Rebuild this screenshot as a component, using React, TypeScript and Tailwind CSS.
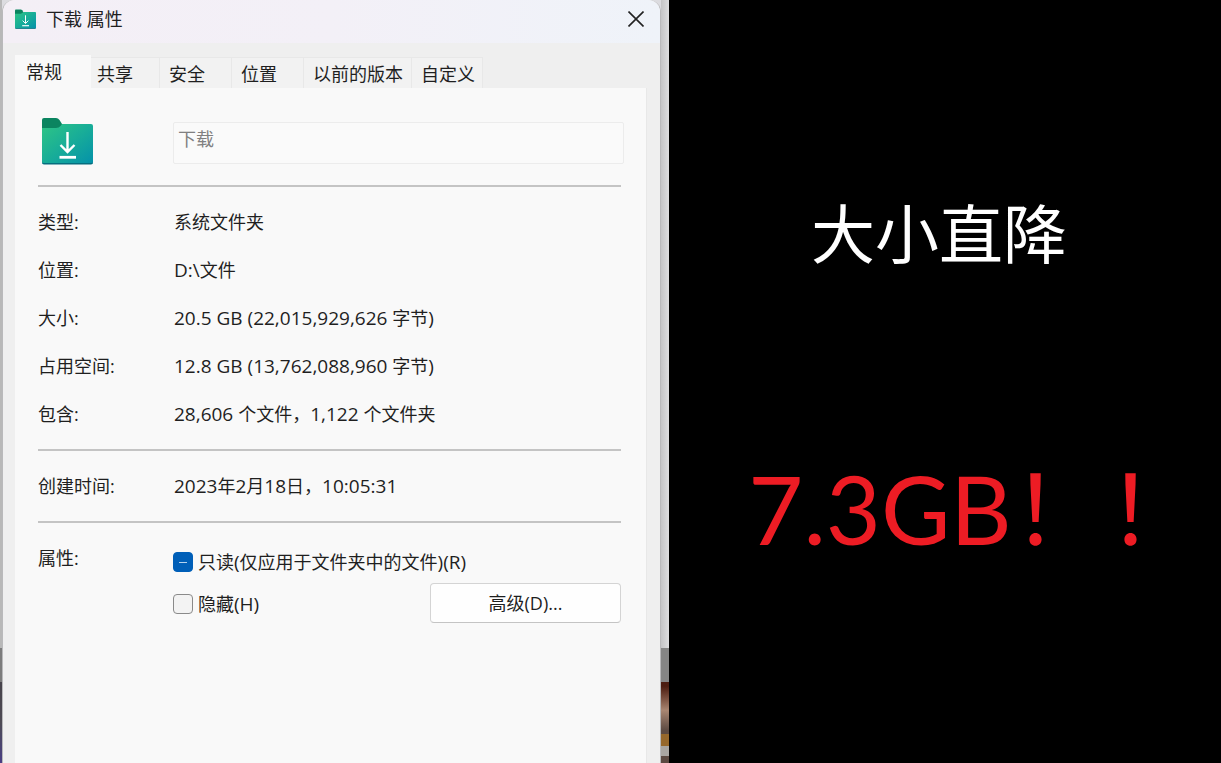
import React, { FunctionComponent, useEffect, useRef, useState } from 'react'

const tabs = [
  { name: '常规', width: 'w-[76px] pl-[11px]' },
  { name: '共享', width: 'w-[69px] pl-[6px]' },
  { name: '安全', width: 'w-[72px] pl-[9px]' },
  { name: '位置', width: 'w-[72px] pl-[9px]' },
  { name: '以前的版本', width: 'w-[108px] pl-[9px]' },
  { name: '自定义', width: 'w-[71px] pl-[9px]' },
]

const details = [
  { label: '类型:', value: '系统文件夹' },
  { label: '位置:', value: 'D:\\文件' },
  { label: '大小:', value: '20.5 GB (22,015,929,626 字节)' },
  { label: '占用空间:', value: '12.8 GB (13,762,088,960 字节)' },
  { label: '包含:', value: '28,606 个文件，1,122 个文件夹' },
]

const checkboxStyle =
  'grid h-5 w-5 shrink-0 appearance-none place-content-center rounded-[4px] border border-[#8a8a8a] bg-[#f3f3f3] checked:border-[#005fb8] checked:bg-[#005fb8] indeterminate:border-[#005fb8] indeterminate:bg-[#005fb8] indeterminate:before:h-px indeterminate:before:w-2 indeterminate:before:bg-[#b5d3ee]'

const FolderIcon: FunctionComponent<{ className: string; id: string }> = ({ className, id }) => (
  <svg viewBox="0 0 51 48" className={className} aria-hidden="true">
    <defs>
      <linearGradient id={id} x1="0" y1="0" x2="1" y2="1">
        <stop offset="0" stopColor="#2fc585" />
        <stop offset="0.5" stopColor="#18ad98" />
        <stop offset="1" stopColor="#0491aa" />
      </linearGradient>
    </defs>
    <path d="M0 3Q0 1 2 1H14Q16 1 17.500 3L20 7V12H0Z" fill="#0b8560" />
    <path d="M0 11H14Q17 11 18.500 9L20 7H49Q51 7 51 9V45Q51 47 49 47H2Q0 47 0 45Z" fill={`url(#${id})`} />
    <path d="M0 44.500Q0 46 2 46H49Q51 46 51 44.500V45.500Q51 47.500 49 47.500H2Q0 47.500 0 45.500Z" fill="#066e7e" />
    <path d="M25.500 15V34M18.500 28L25.500 35L32.500 28" fill="none" stroke="#fff" strokeWidth="2.400" />
    <path d="M17.500 40.300H34" stroke="#fff" strokeWidth="2.800" />
  </svg>
)

// Latin runs are set one step larger than the Chinese around them
const MixedText: FunctionComponent<{ text: string }> = ({ text }) => (
  <span>
    {text.split(/([\x20-\x7e]+)/).map((part, index) =>
      index % 2 === 1 ? (
        <span key={index} className="text-[19px]">{part}</span>
      ) : (
        part
      )
    )}
  </span>
)

const DetailRow: FunctionComponent<{ label: string; value: string }> = ({ label, value }) => (
  <div className="flex h-12 items-center">
    <dt className="w-[136px] shrink-0">{label}</dt>
    <dd className="whitespace-nowrap">
      <MixedText text={value} />
    </dd>
  </div>
)

const PropertiesDialog: FunctionComponent = () => {
  const [activeTab, setActiveTab] = useState<string>('常规')
  const readOnlyRef = useRef<HTMLInputElement>(null)

  // the folder holds both read-only and writable files
  useEffect(() => {
    if (readOnlyRef.current) readOnlyRef.current.indeterminate = true
  }, [])

  return (
    <section className="flex min-w-0 flex-1 flex-col rounded-t-xl border-x border-[#b9b9bb] bg-[#efefef]">
      <header className="flex h-[43px] shrink-0 items-center justify-between rounded-t-xl bg-linear-to-r from-[#f4eff6] via-[#f3f0f7] to-[#eff3f9] pr-4 pl-3">
        <h1 className="flex items-center gap-[10px] pb-[6px]">
          <FolderIcon className="h-5 w-[21px]" id="title-folder" />
          下载 属性
        </h1>
        <button aria-label="关闭" className="pb-[6px]">
          <svg viewBox="0 0 16 16" className="h-4 w-4" fill="none" stroke="#222" strokeWidth="1.600">
            <path d="M0.500 0.500L15.500 15.500M15.500 0.500L0.500 15.500" />
          </svg>
        </button>
      </header>

      <div className="flex flex-1 flex-col pt-3 pr-[13px] pl-3">
        <nav className="flex h-[33px] items-end">
          {tabs.map((tab) => (
            <button
              key={tab.name}
              onClick={() => setActiveTab(tab.name)}
              className={`${tab.width} shrink-0 text-left whitespace-nowrap ${
                tab.name === activeTab
                  ? 'h-[33px] bg-[#f9f9f9]'
                  : 'h-[31px] border-t border-r border-[#e8e8e8] bg-[#f2f2f2] pt-[2px]'
              }`}>
              {tab.name}
            </button>
          ))}
        </nav>

        <div className="flex-1 border-r border-[#e8e8e8] bg-[#f9f9f9] pr-[25px] pl-[23px]">
          <div className="flex h-[97px] items-center pt-[13px]">
            <FolderIcon className="mr-[80px] mb-1 ml-1 h-12 w-[51px] shrink-0" id="large-folder" />
            <input
              aria-label="名称"
              disabled
              defaultValue="下载"
              className="-mr-[3px] h-[42px] min-w-0 flex-1 rounded-[2px] border border-[#ececec] bg-[#fafafa] pb-[10px] pl-1 text-[#808080]"
            />
          </div>

          <dl className="border-y-2 border-[#c4c4c4] py-[11px]">
            {details.map((item) => (
              <DetailRow key={item.label} label={item.label} value={item.value} />
            ))}
          </dl>
          <dl className="border-b-2 border-[#c4c4c4] py-[11px]">
            <DetailRow label="创建时间:" value="2023年2月18日，10:05:31" />
          </dl>

          <fieldset className="flex pt-[23px]">
            <span className="w-[135px] shrink-0">属性:</span>
            <div className="flex-1 pt-1">
              <label className="flex items-center gap-[5px] whitespace-nowrap">
                <input ref={readOnlyRef} type="checkbox" className={checkboxStyle} />
                <MixedText text="只读(仅应用于文件夹中的文件)(R)" />
              </label>
              <div className="mt-[9px] flex items-center justify-between">
                <label className="flex items-center gap-[5px] pt-[2px] whitespace-nowrap">
                  <input type="checkbox" className={checkboxStyle} />
                  <MixedText text="隐藏(H)" />
                </label>
                <button className="h-10 w-[191px] rounded-[4px] border border-[#d4d4d4] border-b-[#c4c4c4] bg-[#fefefe]">
                  高级(D)...
                </button>
              </div>
            </div>
          </fieldset>
        </div>
      </div>
    </section>
  )
}

const App: FunctionComponent = () => {
  return (
    <main className="grid min-h-screen grid-cols-[669fr_552fr] bg-black font-['Open_Sans','Noto_Sans_CJK_SC',sans-serif] text-[18px] leading-6 text-[#1f1f1f]">
      <div className="flex bg-[#dcdce0]">
        <div className="grid w-[2px] grid-rows-[648fr_34fr_81fr]">
          <div className="bg-[#b8b8b8]" />
          <div className="bg-[#7c7c7c]" />
          <div className="bg-linear-to-b from-[#47434b] via-[#4e4b54] to-[#4a3d85]" />
        </div>
        <PropertiesDialog />
        <div className="grid w-2 grid-rows-[648fr_34fr_81fr]">
          <div className="bg-linear-to-r from-[#c4c4c6] to-[#dedee0]" />
          <div className="bg-[#858585]" />
          <div className="bg-linear-to-b from-[#4c1c10] from-5% via-[#a98672] via-35% to-[#5c4a42] to-60%">
            <div className="mt-[52px] h-3 bg-[#96682c]" />
            <div className="h-[10px] bg-[#a9a6a2]" />
          </div>
        </div>
      </div>

      <div className="flex flex-col items-center bg-black pt-[187px] font-['Lato','Noto_Sans_CJK_SC',sans-serif]">
        <p className="mr-3 text-[64px] leading-[94px] whitespace-nowrap text-white">大小直降</p>
        <p className="ml-[60px] pt-[167px] text-[95px] leading-[120px] whitespace-nowrap text-[#ed1c24]">7.3GB！！</p>
      </div>
    </main>
  )
}

export default App
